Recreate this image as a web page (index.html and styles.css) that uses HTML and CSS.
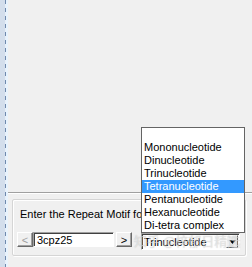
FILE: index.html
```html
<!DOCTYPE html>
<html>
<head>
<meta charset="utf-8">
<link rel="stylesheet" href="styles.css">
</head>
<body>
<div class="app">
  <div class="rail"></div>
  <div class="main">
    <div class="canvas"></div>
    <div class="sep"></div>
    <div class="group">
      <div class="label">Enter the Repeat Motif for each</div>
      <div class="row">
        <div class="btn disabled">&lt;</div>
        <div class="input">3cpz25</div>
        <div class="btn">&gt;</div>
        <div class="combo">
          <div class="combo-text">Trinucleotide</div>
          <div class="combo-arrow"><svg width="7" height="4" viewBox="0 0 7 4"><path d="M0 0h7L3.5 4z" fill="#000"/></svg></div>
        </div>
      </div>
    </div>
  </div>
</div>
<div class="list">
  <div class="item"></div>
  <div class="item">Mononucleotide</div>
  <div class="item">Dinucleotide</div>
  <div class="item">Trinucleotide</div>
  <div class="item selected">Tetranucleotide</div>
  <div class="item">Pentanucleotide</div>
  <div class="item">Hexanucleotide</div>
  <div class="item">Di-tetra complex</div>
</div>
<div class="watermark">知乎 @梓郁日精选</div>
</body>
</html>
```
FILE: styles.css
```css
html, body {
  margin: 0;
  padding: 0;
  width: 252px;
  height: 267px;
  overflow: hidden;
  background: #f0f0f0;
  font-family: "Liberation Sans", Arial, sans-serif;
  font-size: 11px;
  color: #000;
}
.app {
  display: flex;
  height: 267px;
}
.rail {
  width: 8px;
  flex: none;
  background:
    repeating-linear-gradient(to bottom, #6f89ad 0 4px, transparent 4px 8px) 5px 0 / 1px 100% no-repeat,
    linear-gradient(to right, #d3deec 0 5px, #e6eef8 5px 6px, #e8f3fd 6px 8px);
}
.main {
  flex: 1;
  display: flex;
  flex-direction: column;
}
.canvas {
  height: 192px;
  flex: none;
}
.sep {
  height: 0;
  border-top: 1px solid #a0a0a0;
  border-bottom: 1px solid #ffffff;
}
.group {
  margin: 5px 0 0 4px;
  width: 234px;
  height: 57px;
  border: 1px solid #d5d5d5;
  border-radius: 2px;
  box-sizing: border-box;
  padding: 8px 0 0 4px;
  box-shadow: inset 1px 1px 0 #fff, 1px 1px 0 #fff;
}
.label {
  margin-left: 3px;
  line-height: 13px;
  height: 13px;
  white-space: nowrap;
}
.row {
  margin-top: 11px;
  display: flex;
  align-items: flex-start;
}
.btn {
  width: 16px;
  height: 15px;
  box-sizing: border-box;
  border: 1px solid;
  border-color: #fff #696969 #696969 #fff;
  box-shadow: inset -1px -1px 0 #a0a0a0;
  background: #f0f0f0;
  display: flex;
  align-items: center;
  justify-content: center;
  font-size: 11px;
  line-height: 12px;
  color: #000;
}
.btn.disabled {
  color: #a0a0a0;
}
.input {
  width: 81px;
  height: 15px;
  box-sizing: border-box;
  border: 1px solid;
  border-color: #a0a0a0 #fff #fff #a0a0a0;
  box-shadow: inset 1px 1px 0 #404040;
  background: #fff;
  padding: 1px 0 0 3px;
  line-height: 12px;
  margin: 0 2px 0 0;
}
.combo {
  margin: 1px 0 0 9px;
  width: 99px;
  height: 17px;
  box-sizing: border-box;
  border: 1px solid;
  border-color: #a0a0a0 #fff #fff #a0a0a0;
  box-shadow: inset 1px 1px 0 #404040;
  background: #fff;
  display: flex;
}
.combo-text {
  flex: 1;
  padding: 2px 0 0 2px;
  line-height: 12px;
}
.combo-arrow {
  width: 12px;
  margin: 1px 1px 1px 0;
  box-sizing: border-box;
  border: 1px solid;
  border-color: #fff #696969 #696969 #fff;
  background: #f0f0f0;
  display: flex;
  align-items: center;
  justify-content: center;
}
.list {
  position: absolute;
  left: 141px;
  top: 127px;
  width: 104px;
  height: 106px;
  box-sizing: border-box;
  border: 1px solid #646464;
  background: #fff;
}
.item {
  height: 13px;
  line-height: 13px;
  padding-left: 2px;
  white-space: nowrap;
}
.item.selected {
  background: #3399ff;
  color: #fff;
}
.watermark {
  position: absolute;
  left: 134px;
  top: 232px;
  font-family: "Noto Sans CJK SC", sans-serif;
  font-size: 13px;
  line-height: 17px;
  color: rgba(255, 255, 255, 0.5);
  text-shadow: 0 0 1px rgba(110, 110, 110, 0.45);
  white-space: nowrap;
  pointer-events: none;
}
```
